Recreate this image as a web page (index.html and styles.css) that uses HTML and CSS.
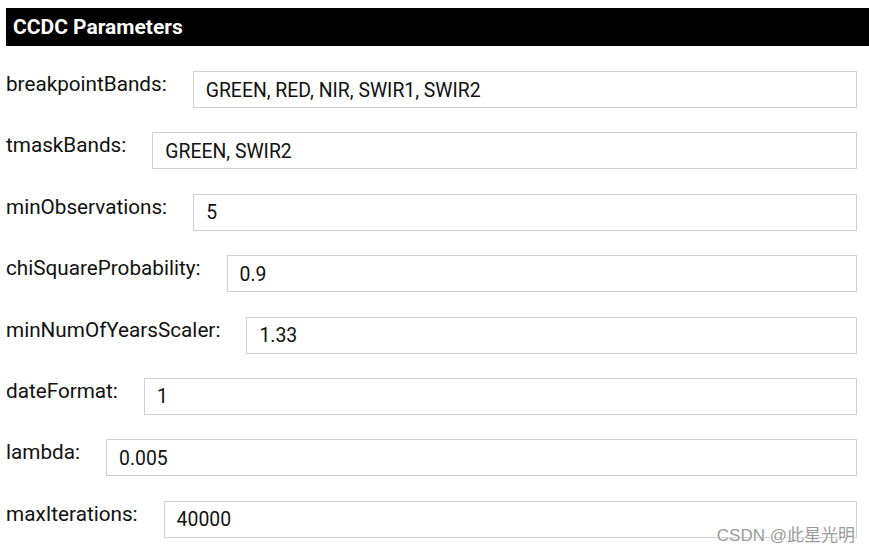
FILE: index.html
```html
<!DOCTYPE html>
<html lang="en">
<head>
    <meta charset="UTF-8">
    <meta name="viewport" content="width=device-width, initial-scale=1.0">
    <title>CCDC Parameters</title>
    <link rel="stylesheet" href="styles.css">
</head>
<body>
    <div class="panel">
        <h2 class="panel-title">CCDC Parameters</h2>
        <form class="params">
            <div class="param-row">
                <label for="breakpointBands">breakpointBands:</label>
                <input type="text" id="breakpointBands" value="GREEN, RED, NIR, SWIR1, SWIR2">
            </div>
            <div class="param-row">
                <label for="tmaskBands">tmaskBands:</label>
                <input type="text" id="tmaskBands" value="GREEN, SWIR2">
            </div>
            <div class="param-row">
                <label for="minObservations">minObservations:</label>
                <input type="text" id="minObservations" value="5">
            </div>
            <div class="param-row">
                <label for="chiSquareProbability">chiSquareProbability:</label>
                <input type="text" id="chiSquareProbability" value="0.9">
            </div>
            <div class="param-row">
                <label for="minNumOfYearsScaler">minNumOfYearsScaler:</label>
                <input type="text" id="minNumOfYearsScaler" value="1.33">
            </div>
            <div class="param-row">
                <label for="dateFormat">dateFormat:</label>
                <input type="text" id="dateFormat" value="1">
            </div>
            <div class="param-row">
                <label for="lambda">lambda:</label>
                <input type="text" id="lambda" value="0.005">
            </div>
            <div class="param-row">
                <label for="maxIterations">maxIterations:</label>
                <input type="text" id="maxIterations" value="40000">
            </div>
        </form>
    </div>
    <div class="watermark">CSDN @此星光明</div>
</body>
</html>
```

FILE: styles.css
```css
body {
    margin: 0;
    padding: 8px 0 0 6px;
    font-family: Roboto, "Noto Sans CJK SC", sans-serif;
    background-color: #fff;
    color: #111;
    overflow: hidden;
}
.panel-title {
    margin: 0;
    height: 38px;
    padding-left: 7px;
    background-color: #000;
    color: #fff;
    font-size: 21px;
    font-weight: bold;
    line-height: 39px;
}
.params {
    padding: 25px 12px 0 0;
}
.param-row {
    display: flex;
    align-items: flex-start;
    gap: 26px;
    margin-bottom: 24.4px;
}
.param-row label {
    font-size: 20.7px;
    line-height: 24px;
    margin-top: 1px;
    white-space: nowrap;
}
.param-row input {
    flex: 1;
    height: 37px;
    padding: 1px 12px 0;
    border: 1px solid #d0d0d0;
    border-radius: 0;
    box-sizing: border-box;
    font-family: Roboto, sans-serif;
    font-size: 19.4px;
    color: #111;
}
.watermark {
    position: absolute;
    right: 14px;
    bottom: 8px;
    font-family: "Liberation Sans", "Noto Sans CJK SC", sans-serif;
    font-size: 17px;
    color: #9a9a9a;
    text-shadow: 0 0 2px #fff, 0 0 2px #fff;
}
```
